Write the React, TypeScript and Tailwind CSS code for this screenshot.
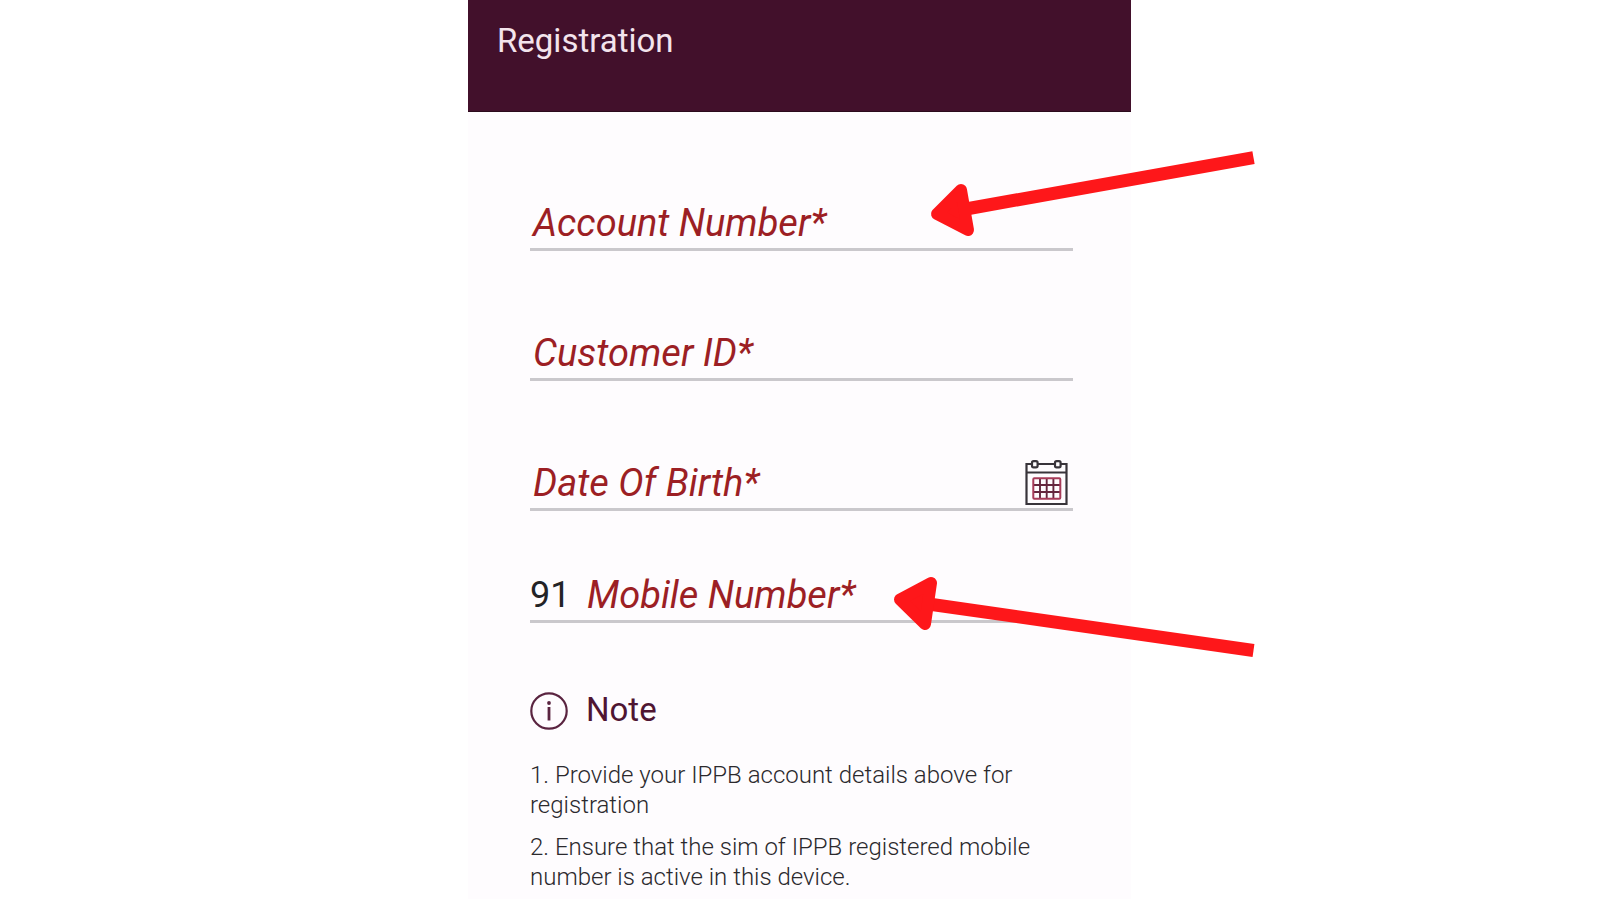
import type { InputHTMLAttributes, ReactNode } from "react";

type FieldProps = InputHTMLAttributes<HTMLInputElement> & {
  id: string;
  label: string;
  before?: ReactNode;
  after?: ReactNode;
};

function Field({ id, label, before, after, ...rest }: FieldProps) {
  return (
    <div className="flex h-[51px] items-start border-b-3 border-[#cac8cc] text-[38px] leading-[46px]">
      {before}
      <label htmlFor={id} className="pl-[3px] whitespace-nowrap text-[#9c1f24] italic">
        {label}*
      </label>
      <input
        id={id}
        required
        className="h-12 min-w-0 flex-1 bg-transparent px-3 text-[#232326] outline-none"
        {...rest}
      />
      {after}
    </div>
  );
}

function CalendarIcon() {
  return (
    <svg width="44" height="46" viewBox="0 0 44 46" fill="none" aria-hidden="true">
      <path d="M8 4H2.500V44H42.500V4H37M14 4H31" stroke="#38343a" strokeWidth="2.200" />
      <path d="M2.500 12.500H42.500" stroke="#38343a" strokeWidth="2.200" />
      <rect x="8" y="1.200" width="5.600" height="6.200" rx="1.600" stroke="#38343a" strokeWidth="2.200" />
      <rect x="31" y="1.200" width="5.600" height="6.200" rx="1.600" stroke="#38343a" strokeWidth="2.200" />
      <path d="M16 18V39M22.700 18V39M29.400 18V39M9.300 25H36.300M9.300 32H36.300" stroke="#64273e" strokeWidth="1.900" />
      <rect x="9.300" y="18.300" width="27" height="20.500" rx="1" stroke="#a63b59" strokeWidth="2" />
    </svg>
  );
}

function InfoIcon() {
  return (
    <svg width="38" height="38" viewBox="0 0 38 38" fill="none" aria-hidden="true">
      <circle cx="19" cy="19" r="17.700" stroke="#5a2440" strokeWidth="2.200" />
      <path d="M19 15V28.500" stroke="#5a2440" strokeWidth="2.800" />
      <circle cx="19" cy="11" r="1.900" fill="#5a2440" />
    </svg>
  );
}

function Arrow({ head, shaft, className }: { head: string; shaft: string; className: string }) {
  return (
    <svg
      width="364"
      height="90"
      viewBox="0 0 364 90"
      className={`pointer-events-none absolute ${className}`}
      aria-hidden="true"
    >
      <path d={shaft} stroke="#fe171a" strokeWidth="13" />
      <path d={head} fill="#fe171a" stroke="#fe171a" strokeWidth="12" strokeLinejoin="round" />
    </svg>
  );
}

export default function App() {
  return (
    <div className="min-h-screen overflow-x-hidden bg-white font-['Roboto',sans-serif]">
      <main className="relative mx-auto min-h-screen max-w-[663px] bg-[#fefcfe]">
        <header className="h-28 border-b border-[#2c0a1c] bg-[#42102b] px-[29px] pt-[21px]">
          <h1 className="text-[33px] leading-10 text-[#f3e4ec]">Registration</h1>
        </header>

        <form className="pt-[88px] pr-[58px] pl-[62px]">
          <div className="flex flex-col gap-[79px]">
            <Field id="account" label="Account Number" inputMode="numeric" />
            <Field id="customer" label="Customer ID" />
            <Field
              id="dob"
              label="Date Of Birth"
              after={
                <button type="button" aria-label="Choose date" className="mr-[5px] h-[46px]">
                  <CalendarIcon />
                </button>
              }
            />
          </div>
          <div className="mt-[61px]">
            <Field
              id="mobile"
              label="Mobile Number"
              type="tel"
              before={<span className="w-[54px] text-4xl leading-[46px] text-[#232326]">91</span>}
            />
          </div>
        </form>

        <section className="px-[62px] pt-[69px]">
          <div className="flex items-start gap-[18px] text-[#4f1532]">
            <InfoIcon />
            <h2 className="text-[33px] leading-9">Note</h2>
          </div>
          <ol className="mt-[30px] flex flex-col gap-3 text-2xl leading-[30px] font-light text-[#2b292d]">
            <li>1. Provide your IPPB account details above for registration</li>
            <li>2. Ensure that the sim of IPPB registered mobile number is active in this device.</li>
          </ol>
        </section>

        <Arrow
          className="top-[150px] left-[460px]"
          shaft="M38 59L325.500 7.700"
          head="M9 64L33 40L40 80Z"
        />
        <Arrow
          className="top-[570px] left-[424px]"
          shaft="M40 34.500L361.500 80.500"
          head="M8 29.500L39 13L33 54Z"
        />
      </main>
    </div>
  );
}
